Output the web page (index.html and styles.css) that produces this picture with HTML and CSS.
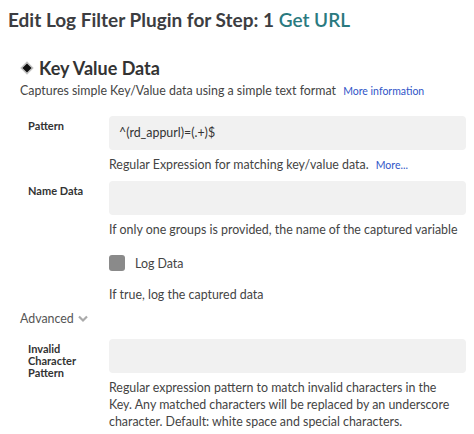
FILE: index.html
```html
<!DOCTYPE html>
<html lang="en">
<head>
    <meta charset="UTF-8">
    <meta name="viewport" content="width=device-width, initial-scale=1.0">
    <title>Edit Log Filter Plugin</title>
    <link rel="stylesheet" href="styles.css">
</head>
<body>
    <h2 class="page-title">Edit Log Filter Plugin for Step: 1 <span class="step-name">Get URL</span></h2>

    <div class="plugin">
        <h3 class="plugin-title">
            <svg class="plugin-icon" width="14" height="14" viewBox="0 0 14 14">
                <rect x="3" y="3" width="8" height="8" transform="rotate(45 7 7)" fill="#111" stroke="#c4c4c4" stroke-width="1.5"/>
            </svg>
            Key Value Data
        </h3>
        <p class="plugin-desc">Captures simple Key/Value data using a simple text format <a href="#" class="small-link">More information</a></p>

        <!-- Campi -->
        <div class="field">
            <label class="field-label">Pattern</label>
            <div class="field-body">
                <div class="input">^(rd_appurl)=(.+)$</div>
                <p class="help">Regular Expression for matching key/value data. <a href="#" class="small-link">More...</a></p>
            </div>
        </div>

        <div class="field">
            <label class="field-label">Name Data</label>
            <div class="field-body">
                <div class="input"></div>
                <p class="help">If only one groups is provided, the name of the captured variable</p>
            </div>
        </div>

        <div class="field">
            <div class="field-label"></div>
            <div class="field-body">
                <div class="checkbox-row">
                    <span class="checkbox"></span>
                    <span>Log Data</span>
                </div>
                <p class="help help-check">If true, log the captured data</p>
            </div>
        </div>

        <div class="advanced">
            Advanced
            <svg class="chevron" width="10" height="8" viewBox="0 0 10 8">
                <path d="M1 1.5 L5 5.5 L9 1.5" fill="none" stroke="#aaa" stroke-width="2.2"/>
            </svg>
        </div>

        <div class="field">
            <label class="field-label">Invalid Character Pattern</label>
            <div class="field-body">
                <div class="input"></div>
                <p class="help">Regular expression pattern to match invalid characters in the<br>Key. Any matched characters will be replaced by an underscore<br>character. Default: white space and special characters.</p>
            </div>
        </div>
    </div>
</body>
</html>
```

FILE: styles.css
```css
body {
    margin: 0;
    padding: 8px 8px 0 8px;
    font-family: 'Lato', sans-serif;
    color: #444;
    background: #fff;
}

.page-title {
    margin: 0;
    font-size: 19px;
    font-weight: 700;
    color: #3c3d41;
    line-height: 24px;
}

.step-name {
    color: #2a7a7f;
    font-weight: 600;
}

.plugin {
    padding-left: 12px;
    margin-top: 25px;
}

.plugin-title {
    margin: 0;
    display: flex;
    align-items: center;
    gap: 5px;
    font-size: 18px;
    font-weight: 700;
    color: #333;
    line-height: 22px;
}

.plugin-desc {
    margin: 3px 0 16px 0;
    font-size: 12.4px;
    line-height: 18px;
}

.small-link {
    color: #2f55c8;
    font-size: 10.5px;
    text-decoration: none;
    margin-left: 4px;
}

.field {
    display: flex;
    margin-bottom: 7px;
}

.field-label {
    width: 89px;
    flex-shrink: 0;
    padding-left: 8px;
    padding-top: 4px;
    font-size: 11px;
    font-weight: 700;
    color: #333;
    line-height: 12px;
    box-sizing: border-box;
}

.field-body {
    flex: 1;
}

.input {
    height: 34px;
    background: #f1f1f1;
    border-radius: 4px;
    font-size: 12.4px;
    line-height: 34px;
    padding: 0 10px;
    color: #333;
}

.help {
    margin: 6px 0 0 0;
    font-size: 12.4px;
    line-height: 17px;
}

.checkbox-row {
    display: flex;
    align-items: center;
    gap: 10px;
    margin-top: 9px;
    height: 18px;
    font-size: 12.4px;
}

.checkbox {
    width: 16px;
    height: 16px;
    border-radius: 3px;
    background: #8a8a8a;
}

.help-check {
    margin-top: 14px;
}

.advanced {
    font-size: 12.4px;
    line-height: 18px;
    color: #555;
    margin: 3px 0 11px 0;
    display: flex;
    align-items: center;
    gap: 4px;
}
```
